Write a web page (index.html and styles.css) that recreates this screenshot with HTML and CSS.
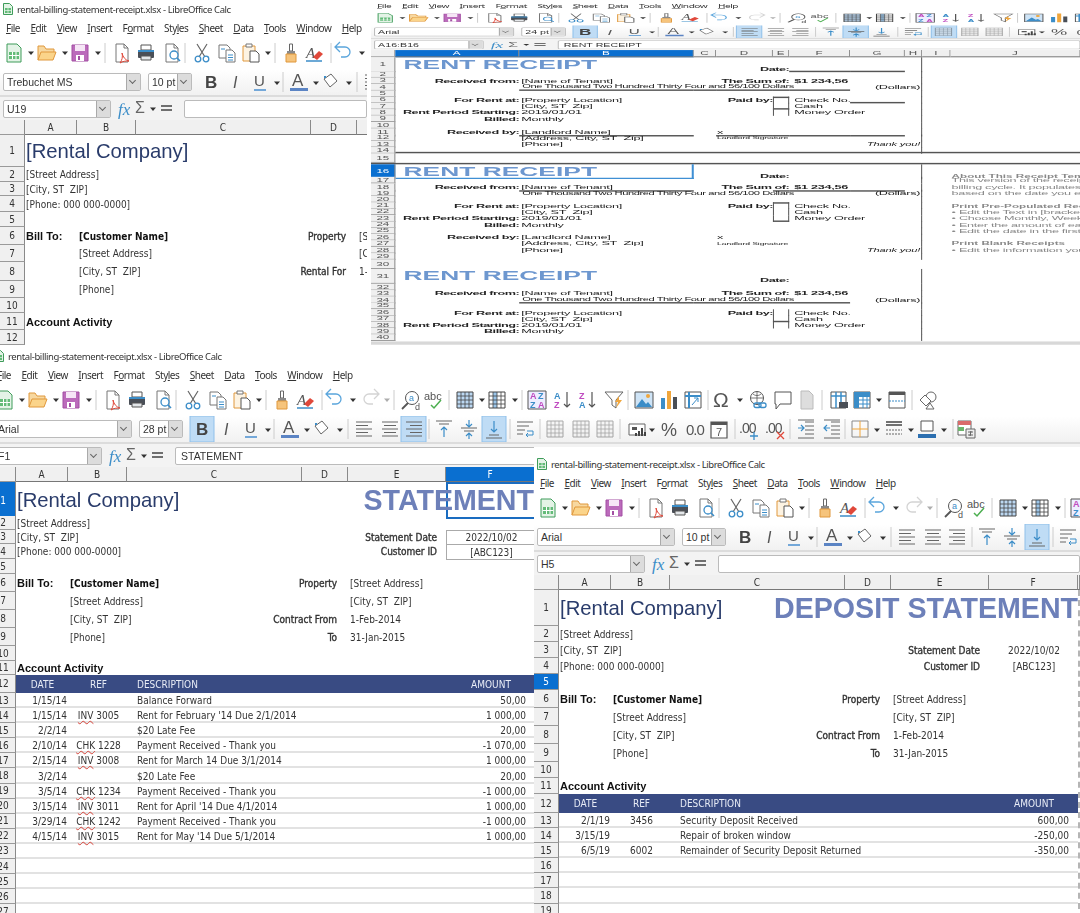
FILE: index.html
```html
<!DOCTYPE html>
<html lang="en">
<head>
    <meta charset="UTF-8">
    <title>rental-billing-statement-receipt.xlsx - LibreOffice Calc</title>
    <link rel="stylesheet" href="styles.css">
</head>
<body>
    <!-- shared toolbar artwork, drawn once and reused by every window -->
    <svg class="defs" width="0" height="0">
        <defs>
            <path id="dd" d="M-3-1.5h6l-3 3.5z" fill="#333"/>
            <g id="doc"><path d="M-6-9h8l4 4v14H-6z" fill="#fff" stroke="#777"/><path d="M2-9v4h4" fill="none" stroke="#777"/></g>
            <g id="grid"><path d="M-8-8h16v16H-8z" stroke="#444"/><path d="M-8-4h16M-8 0h16M-8 4h16M-4-8V8M0-8V8M4-8V8" stroke="#444" stroke-width=".8" fill="none"/></g>
        </defs>
        <symbol id="std-bar" viewBox="0 0 960 24">
            <g transform="translate(14 12)"><path d="M-7-9H3l4 4V9H-7z" fill="#e3f3e6" stroke="#3f9c5a"/><path d="M-5-1H5V6H-5z" fill="#63bb78"/><path d="M-5 2.5H5M-1.5-1V6M2-1V6" stroke="#fff"/></g>
            <use href="#dd" x="31" y="12"/>
            <g transform="translate(47 12)"><path d="M-9 7V-7h6l2 3h8v3" fill="#f7d8a0" stroke="#e0983c"/><path d="M-9 7l3-8H9L6 7z" fill="#fbd48a" stroke="#e0983c"/></g>
            <use href="#dd" x="65" y="12"/>
            <g transform="translate(80 12)"><path d="M-8-8H8V8H-8z" fill="#bb6bbb" stroke="#a34fa3"/><path d="M-5-8H5v6H-5z" fill="#f6e6f6"/><path d="M-4 2H4V8H-4z" fill="#fff"/><path d="M-2 3V7H0V3z" fill="#a34fa3"/></g>
            <use href="#dd" x="98" y="12"/>
            <path d="M105 2v20M185 2v20M275 2v20M331 2v20M403 2v20M458 2v20M531 2v20M637 2v20M717 2v20M831 2v20M921 2v20" stroke="#ccc"/>
            <g transform="translate(122 12)"><use href="#doc"/><path d="M0 0c1 4 3 7 7 8-3 0-6 0-9 2 2-3 3-6 2-10z" fill="none" stroke="#e0483a"/></g>
            <g transform="translate(146 12)"><path d="M-5-8H5v5H-5z" fill="#fff" stroke="#555"/><rect x="-8" y="-3" width="16" height="8" rx="1" fill="#4a4f57"/><path d="M-8-3H8v2H-8z" fill="#3b8dc8"/><path d="M-5 3H5V7H-5z" fill="#e4e7ea" stroke="#555"/></g>
            <g transform="translate(172 12)"><use href="#doc"/><circle cx="2" cy="2" r="4" fill="#fff" stroke="#3b8dc8" stroke-width="1.3"/><path d="M5 5l3 3" stroke="#3b8dc8" stroke-width="1.6"/></g>
            <g transform="translate(202 12)" fill="none"><path d="M-5-9L3 4M5-9L-3 4" stroke="#666" stroke-width="1.2"/><circle cx="-4" cy="6" r="2.8" stroke="#3b8dc8" stroke-width="1.3"/><circle cx="4" cy="6" r="2.8" stroke="#3b8dc8" stroke-width="1.3"/></g>
            <g transform="translate(227 12)" stroke="#777"><path d="M-8-8h8l3 3V5H-8z" fill="#fff"/><path d="M-1-3h6l3 3V9H-1z" fill="#fff"/><path d="M1 2h5M1 4.5h5M1 7h5M-6-4h4" stroke="#3b8dc8"/></g>
            <g transform="translate(251 12)"><path d="M-8-7H4V8H-8z" fill="#fdf3e2" stroke="#e0983c"/><path d="M-5-9h6v3h-6z" fill="#fff" stroke="#777"/><path d="M-1-2h6l3 3V9H-1z" fill="#fff" stroke="#555"/></g>
            <use href="#dd" x="268" y="12"/>
            <g transform="translate(291 12)"><path d="M-1.5-9h3v7h-3z" fill="#fff" stroke="#666"/><path d="M-4-2H4V1H-4z" fill="#8a8a8a"/><path d="M-5 1H5V9H-5z" fill="#f6c47c" stroke="#e0983c"/></g>
            <g transform="translate(314 12)"><text x="-8" y="5" font-family="Liberation Serif" font-style="italic" font-size="15" fill="#555">A</text><path d="M-8 8H8" stroke="#3b8dc8" stroke-width="1.5"/><path d="M-1 4l6-6 4 3-6 6z" fill="#e0483a"/></g>
            <use href="#dd" x="362" y="12"/>
            <path d="M340 16l-5-5 5-5M335 11h10a5 5 0 0 1 0 10h-4" transform="translate(0 -5)" fill="none" stroke="#5aa5dc" stroke-width="1.3"/>
            <path d="M383 16l5-5-5-5M388 11h-10a5 5 0 0 0 0 10h4" transform="translate(0 -5)" fill="none" stroke="#d4d4d4" stroke-width="1.3"/>
            <use href="#dd" x="396" y="12" opacity=".4"/>
            <g transform="translate(420 12)" fill="none"><circle cx="1" cy="-2" r="6.5" stroke="#555"/><path d="M-3 3l-6 6" stroke="#555" stroke-width="1.8"/><text x="-2" y="1" font-family="Liberation Sans" font-size="9" fill="#3b8dc8">a</text><text x="4" y="10" font-family="Liberation Sans" font-size="9" fill="#555">d</text></g>
            <g transform="translate(443 12)"><text x="-10" y="0" font-family="Liberation Sans" font-size="11" fill="#555">abc</text><path d="M-3 5l3 3 7-8" fill="none" stroke="#4caf50" stroke-width="1.5"/></g>
            <g transform="translate(474 12)"><use href="#grid" fill="#bcd8f2"/></g>
            <use href="#dd" x="491" y="12"/>
            <g transform="translate(506 12)"><path d="M-4-8H0V8H-4z" fill="#9cc6ea"/><use href="#grid" fill="none"/></g>
            <use href="#dd" x="524" y="12"/>
            <g transform="translate(546 12)" font-family="Liberation Sans" font-size="9" font-weight="bold"><path d="M-9-9H9V9H-9z" fill="#eef" stroke="#555"/><text x="-7" y="-1" fill="#c04bc0">A</text><text x="1" y="-1" fill="#3b8dc8">Z</text><text x="-7" y="8" fill="#3b8dc8">Z</text><text x="1" y="8" fill="#c04bc0">A</text></g>
            <g transform="translate(572 12)" font-family="Liberation Sans" font-size="9" font-weight="bold"><text x="-9" y="-1" fill="#3b8dc8">A</text><text x="-9" y="8" fill="#c04bc0">Z</text><path d="M4-8V7M1 4l3 3 3-3" fill="none" stroke="#555" stroke-width="1.2"/></g>
            <g transform="translate(597 12)" font-family="Liberation Sans" font-size="9" font-weight="bold"><text x="-9" y="-1" fill="#c04bc0">Z</text><text x="-9" y="8" fill="#3b8dc8">A</text><path d="M4-8V7M1 4l3 3 3-3" fill="none" stroke="#555" stroke-width="1.2"/></g>
            <g transform="translate(623 12)"><path d="M-9-8H9L2 0V8L-2 5V0z" fill="#fff" stroke="#666"/><path d="M5-4L1 2h3L2 8 8 0H5z" fill="#f0a63c"/></g>
            <g transform="translate(653 12)"><path d="M-9-8H9V8H-9z" fill="#cfe4f6" stroke="#555"/><path d="M-8 7l6-8 4 5 2-2 4 5z" fill="#3b8dc8"/><circle cx="4" cy="-4" r="2" fill="#f0a63c"/></g>
            <g transform="translate(678 12)"><path d="M-8-2h4V9h-4z" fill="#3b8dc8"/><path d="M-2-9H2V9H-2z" fill="#f0a63c"/><path d="M4-3H8V9H4z" fill="#4a4f57"/></g>
            <g transform="translate(702 12)"><path d="M-8-8H8V8H-8z" fill="#fff" stroke="#555"/><path d="M-8-4H8M-4-8V8" stroke="#3b8dc8" stroke-width="2"/><path d="M-1 5L5-2M5 2V-2H1" fill="none" stroke="#3b8dc8"/></g>
            <text x="722" y="19" font-family="Liberation Sans" font-size="21" fill="#555">Ω</text>
            <use href="#dd" x="749" y="12"/>
            <g transform="translate(767 12)" fill="none"><circle cx="-1" cy="-2" r="6.5" stroke="#555"/><path d="M-7-2H5M-1-8.5V4.5M-5-6c2 2 6 2 8 0" stroke="#555" stroke-width=".8"/><rect x="-4" y="3" width="7" height="4.5" rx="2" stroke="#3b8dc8" stroke-width="1.3"/><rect x="1" y="3" width="7" height="4.5" rx="2" stroke="#3b8dc8" stroke-width="1.3"/></g>
            <path d="M784 4h16v12h-11l-4 5v-5h-1z" fill="#fff" stroke="#555"/>
            <g transform="translate(816 12)"><path d="M-6-9H2L6-5V9H-6z" fill="#ddd" stroke="#bbb"/></g>
            <g transform="translate(848 12)"><path d="M-8-8H7V8H-8z" fill="#fff" stroke="#555"/><path d="M-8-4H7M-3-8V8M2-8V8" stroke="#3b8dc8" stroke-width="1.5"/><path d="M0 2H9V8H0z" fill="#4a4f57"/></g>
            <g transform="translate(871 12)"><path d="M-8-8H8V8H-8z" fill="#fff" stroke="#555"/><path d="M-8-8H8V-3H-8zM-8-3H-3V8H-8z" fill="#3b8dc8"/><path d="M-3 0H8M-3 4H8M1-3V8M5-3V8" stroke="#3b8dc8"/></g>
            <use href="#dd" x="888" y="12"/>
            <g transform="translate(906 12)"><path d="M-8-8H8V8H-8z" fill="#fff" stroke="#555"/><path d="M-8-8H8V-5H-8z" fill="#555"/><path d="M-8 1H8" stroke="#3b8dc8" stroke-dasharray="2 1"/></g>
            <g transform="translate(937 12)" fill="#fff" stroke="#666"><circle cx="3" cy="-3" r="5"/><path d="M-8 0l5-5 6 6-5 5z"/><path d="M-2 9l4-6 4 6z"/></g>
        </symbol>
        <symbol id="fmt-bar" viewBox="195 0 805 26">
            <text x="205" y="19" font-family="Liberation Sans" font-weight="bold" font-size="17" fill="#444">B</text>
            <text x="233" y="19" font-family="Liberation Sans" font-style="italic" font-size="16" fill="#555">I</text>
            <g transform="translate(260 13)"><text x="-6" y="4" font-family="Liberation Sans" font-size="15" fill="#555">U</text><path d="M-6 8H6" stroke="#4a8fd0" stroke-width="1.5"/></g>
            <use href="#dd" x="277" y="14"/>
            <path d="M283 3v20M357 3v20M438 3v20M519 3v20M549 3v20M629 3v20M744 3v20M799 3v20M854 3v20M962 3v20" stroke="#ccc"/>
            <g transform="translate(299 13)"><text x="-7" y="4" font-family="Liberation Sans" font-size="17" fill="#555">A</text><path d="M-9 6H9v3H-9z" fill="#5b84c4"/></g>
            <use href="#dd" x="316" y="14"/>
            <g transform="translate(331 13)"><path d="M-7-3L0-8 6-1-1 5z" fill="#fff" stroke="#666"/><path d="M-6-4v-2" stroke="#3b8dc8" stroke-width="2"/><path d="M-8 6H8v4H-8z" fill="#f4f4f4"/></g>
            <use href="#dd" x="349" y="14"/>
            <path transform="translate(373 13)" d="M-8-7H8M-8-3.5H4M-8 0H8M-8 3.5H4M-8 7H8" stroke="#666"/>
            <path transform="translate(399 13)" d="M-8-7H8M-6-3.5H6M-8 0H8M-6 3.5H6M-8 7H8" stroke="#666"/>
            <path transform="translate(423 13)" d="M-8-7H8M-4-3.5H8M-8 0H8M-4 3.5H8M-8 7H8" stroke="#666"/>
            <g transform="translate(453 13)"><path d="M-8-8H8M-5-5H5" stroke="#666" stroke-width="1.2"/><path d="M0 8V-2M-3 1l3-3 3 3" fill="none" stroke="#3b8dc8" stroke-width="1.2"/></g>
            <g transform="translate(478 13)"><path d="M-8-1H8M-5 2H5" stroke="#666" stroke-width="1.2"/><path d="M0-9v7M-3-5l3 3 3-3M0 10V4M-3 7l3-3 3 3" fill="none" stroke="#3b8dc8" stroke-width="1.2"/></g>
            <g transform="translate(503 13)"><path d="M-8 9H8M-5 6H5" stroke="#666" stroke-width="1.2"/><path d="M0-8V3M-3 0l3 3 3-3" fill="none" stroke="#3b8dc8" stroke-width="1.2"/></g>
            <g transform="translate(534 13)"><path d="M-8-7H8M-8-3H4M-8 1H0M-8 5H-2" stroke="#666" stroke-width="1.2"/><path d="M2 2h6v4H1M3 4L1 6l2 2" fill="none" stroke="#3b8dc8"/></g>
            <g transform="translate(564 13)"><use href="#grid" fill="#eee" opacity=".45"/></g>
            <g transform="translate(590 13)"><use href="#grid" fill="#eee" opacity=".45"/></g>
            <g transform="translate(614 13)"><use href="#grid" fill="#eee" opacity=".45"/></g>
            <g transform="translate(646 13)"><path d="M-8-5H8V6H-8z" fill="#fff" stroke="#666"/><path d="M-5-2H0V1H-5z" fill="#555"/><path d="M2 7V2M5 7V-1M8 7V3M-1 7V4" stroke="#444" stroke-width="2"/></g>
            <use href="#dd" x="661" y="14"/>
            <text x="670" y="20" font-family="Liberation Sans" font-size="18" fill="#555">%</text>
            <text x="695" y="19" font-family="Liberation Sans" font-size="15" letter-spacing="-1" fill="#555">0.0</text>
            <g transform="translate(728 13)"><path d="M-8-7H8V9H-8z" fill="#fff" stroke="#555" stroke-width="1.2"/><path d="M-8-7H8V-4H-8z" fill="#555"/><text x="-3" y="7" font-family="Liberation Sans" font-size="11" fill="#555">7</text></g>
            <g transform="translate(759 13)"><text x="-11" y="4" font-family="Liberation Sans" font-size="14" letter-spacing="-1" fill="#555">.00</text><path d="M4 3v8M0 7h8" stroke="#3b8dc8" stroke-width="1.3"/></g>
            <g transform="translate(785 13)"><text x="-11" y="4" font-family="Liberation Sans" font-size="14" letter-spacing="-1" fill="#555">.00</text><path d="M1 3l7 7M8 3l-7 7" stroke="#e0483a" stroke-width="1.3"/></g>
            <g transform="translate(815 13)"><path d="M-1-7H8M-1-3H8M-1 1H8M-1 5H8M-8 9H8M-8-9H8" stroke="#666"/><path d="M-8-1H-2M-5-4l3 3-3 3" fill="none" stroke="#3b8dc8" stroke-width="1.2"/></g>
            <g transform="translate(841 13)"><path d="M-1-7H8M-1-3H8M-1 1H8M-1 5H8M-8 9H8M-8-9H8" stroke="#666"/><path d="M-2-1H-8M-5-4l-3 3 3 3" fill="none" stroke="#3b8dc8" stroke-width="1.2"/></g>
            <g transform="translate(869 13)" fill="none"><path d="M-8-8H8V8H-8z" stroke="#888"/><path d="M0-8V8M-8 0H8" stroke="#f0a63c"/></g>
            <use href="#dd" x="886" y="14"/>
            <path d="M895 6h16M895 9h16" stroke="#444" stroke-width="1.4"/><path d="M895 14h16M895 18h16" stroke="#666" stroke-dasharray="2 1"/>
            <use href="#dd" x="920" y="14"/>
            <g transform="translate(936 13)"><path d="M-6-8H6V2H-6z" fill="#fff" stroke="#555"/><path d="M-9 5H9v4H-9z" fill="#2c6fb0"/></g>
            <use href="#dd" x="953" y="14"/>
            <g transform="translate(975 13)"><path d="M-8-8H5V6H-8z" fill="#fff" stroke="#666"/><path d="M-8-8H5V-4H-8z" fill="#d96b6b"/><path d="M-8-2H-2V2H-8z" fill="#6cb56c"/><path d="M0 0H9V9H0z" fill="#eee" stroke="#666"/><path d="M2 3H7M2 6H7M5 2L4 7" stroke="#444" stroke-width=".8"/></g>
            <use href="#dd" x="992" y="14"/>
        </symbol>
        <symbol id="calc-icon" viewBox="0 0 10 12">
            <path d="M.5.5h6l3 3v8H.5z" fill="#e3f3e6" stroke="#3f9c5a"/><path d="M2 5H8v5H2z" fill="#63bb78"/><path d="M2 7.5H8M5 5v5" stroke="#fff" stroke-width=".6"/>
        </symbol>
        <symbol id="fx-bar" viewBox="0 0 80 20">
            <text x="4" y="16" font-family="Liberation Serif" font-style="italic" font-size="17" fill="#3b8dc8">fx</text>
            <text x="21" y="14" font-family="Liberation Sans" font-size="16" fill="#666">Σ</text>
            <use href="#dd" x="39" y="10"/>
            <path d="M47 7H58M47 11H58" stroke="#444" stroke-width="1.5"/>
        </symbol>
    </svg>

    <!-- top left window -->
    <div class="win win-a">
        <div class="titlebar"><svg class="app-icon"><use href="#calc-icon"/></svg>rental-billing-statement-receipt.xlsx - LibreOffice Calc</div>
        <div class="menubar"><span><u>F</u>ile</span><span><u>E</u>dit</span><span><u>V</u>iew</span><span><u>I</u>nsert</span><span>F<u>o</u>rmat</span><span>Sty<u>l</u>es</span><span><u>S</u>heet</span><span><u>D</u>ata</span><span><u>T</u>ools</span><span><u>W</u>indow</span><span><u>H</u>elp</span></div>
        <div class="toolbar"><svg class="std-icons"><use href="#std-bar"/></svg></div>
        <div class="fmtbar">
            <div class="combo font-box">Trebuchet MS<i class="arrow"></i></div>
            <div class="combo size-box">10 pt<i class="arrow"></i></div>
            <svg class="fmt-icons" viewBox="195 0 805 26"><use x="195" href="#fmt-bar"/></svg>
        </div>
        <div class="formulabar">
            <div class="combo name-box">U19<i class="arrow"></i></div>
            <svg class="fx-icons"><use href="#fx-bar"/></svg>
            <div class="formula"></div>
        </div>
        <div class="sheet">
            <div class="row colhdr"><div class="rh"></div><div class="ch">A</div><div class="ch">B</div><div class="ch">C</div><div class="ch">D</div><div class="ch">E</div><div class="ch">F</div><div class="ch"></div></div>
            <div class="row h32"><div class="rh">1</div><div class="cell c-a company">[Rental Company]</div></div>
            <div class="row h15"><div class="rh">2</div><div class="cell c-a">[Street Address]</div></div>
            <div class="row h14"><div class="rh">3</div><div class="cell c-a">[City, ST&nbsp; ZIP]</div></div>
            <div class="row h16"><div class="rh">4</div><div class="cell c-a">[Phone: 000 000-0000]</div></div>
            <div class="row h15"><div class="rh">5</div></div>
            <div class="row h18"><div class="rh">6</div><div class="cell c-a bill">Bill To:</div><div class="cell c-b strong">[Customer Name]</div><div class="cell c-d label">Property</div><div class="cell c-e">[Street Address]</div></div>
            <div class="row h17"><div class="rh">7</div><div class="cell c-b">[Street Address]</div><div class="cell c-e">[City, ST&nbsp; ZIP]</div></div>
            <div class="row h19"><div class="rh">8</div><div class="cell c-b">[City, ST&nbsp; ZIP]</div><div class="cell c-d label">Rental For</div><div class="cell c-e">1-Feb-2014</div></div>
            <div class="row h17"><div class="rh">9</div><div class="cell c-b">[Phone]</div></div>
            <div class="row h15"><div class="rh">10</div></div>
            <div class="row h17"><div class="rh">11</div><div class="cell c-a bill">Account Activity</div></div>
            <div class="row h15"><div class="rh">12</div></div>
        </div>
    </div>

    <!-- bottom left window, its toolbars run the whole width behind the last window -->
    <div class="win win-c">
        <div class="titlebar"><svg class="app-icon"><use href="#calc-icon"/></svg>rental-billing-statement-receipt.xlsx - LibreOffice Calc</div>
        <div class="menubar"><span><u>F</u>ile</span><span><u>E</u>dit</span><span><u>V</u>iew</span><span><u>I</u>nsert</span><span>F<u>o</u>rmat</span><span>Sty<u>l</u>es</span><span><u>S</u>heet</span><span><u>D</u>ata</span><span><u>T</u>ools</span><span><u>W</u>indow</span><span><u>H</u>elp</span></div>
        <div class="toolbar"><svg class="std-icons"><use href="#std-bar"/></svg></div>
        <div class="fmtbar">
            <div class="combo font-box">Arial<i class="arrow"></i></div>
            <div class="combo size-box">28 pt<i class="arrow"></i></div>
            <svg class="fmt-icons" viewBox="195 0 805 26"><rect class="hl" x="199" y="0" width="24" height="26"/><rect class="hl" x="410" y="0" width="25" height="26"/><rect class="hl" x="491" y="0" width="24" height="26"/><use x="195" href="#fmt-bar"/></svg>
        </div>
        <div class="formulabar">
            <div class="combo name-box">F1<i class="arrow"></i></div>
            <svg class="fx-icons"><use href="#fx-bar"/></svg>
            <div class="formula">STATEMENT</div>
        </div>
        <div class="sheet">
            <div class="row colhdr"><div class="rh"></div><div class="ch">A</div><div class="ch">B</div><div class="ch">C</div><div class="ch">D</div><div class="ch">E</div><div class="ch on">F</div></div>
            <div class="row h34"><div class="rh on">1</div><div class="cell c-a company">[Rental Company]</div><div class="cell c-f doc-title selected">STATEMENT</div></div>
            <div class="row h14"><div class="rh">2</div><div class="cell c-a">[Street Address]</div></div>
            <div class="row h14"><div class="rh">3</div><div class="cell c-a">[City, ST&nbsp; ZIP]</div><div class="cell c-e label">Statement Date</div><div class="cell c-f value boxed">2022/10/02</div></div>
            <div class="row h15"><div class="rh">4</div><div class="cell c-a">[Phone: 000 000-0000]</div><div class="cell c-e label">Customer ID</div><div class="cell c-f value boxed">[ABC123]</div></div>
            <div class="row h15"><div class="rh">5</div></div>
            <div class="row h18"><div class="rh">6</div><div class="cell c-a bill">Bill To:</div><div class="cell c-b strong">[Customer Name]</div><div class="cell c-d label">Property</div><div class="cell c-e">[Street Address]</div></div>
            <div class="row h18"><div class="rh">7</div><div class="cell c-b">[Street Address]</div><div class="cell c-e">[City, ST&nbsp; ZIP]</div></div>
            <div class="row h18"><div class="rh">8</div><div class="cell c-b">[City, ST&nbsp; ZIP]</div><div class="cell c-d label">Contract From</div><div class="cell c-e">1-Feb-2014</div></div>
            <div class="row h18"><div class="rh">9</div><div class="cell c-b">[Phone]</div><div class="cell c-d label">To</div><div class="cell c-e">31-Jan-2015</div></div>
            <div class="row h15"><div class="rh">10</div></div>
            <div class="row h14"><div class="rh">11</div><div class="cell c-a bill">Account Activity</div></div>
            <div class="row h18 band"><div class="rh">12</div><div class="cell c-a center">DATE</div><div class="cell c-b center">REF</div><div class="cell c-c desc">DESCRIPTION</div><div class="cell c-f center">AMOUNT</div></div>
            <div class="row item"><div class="rh">13</div><div class="cell c-a date">1/15/14</div><div class="cell c-c desc">Balance Forward</div><div class="cell c-f num">50,00</div></div>
            <div class="row item"><div class="rh">14</div><div class="cell c-a date">1/15/14</div><div class="cell c-b center"><span class="typo">INV</span>&nbsp;3005</div><div class="cell c-c desc">Rent for February '14 Due 2/1/2014</div><div class="cell c-f num">1 000,00</div></div>
            <div class="row item"><div class="rh">15</div><div class="cell c-a date">2/2/14</div><div class="cell c-c desc">$20 Late Fee</div><div class="cell c-f num">20,00</div></div>
            <div class="row item"><div class="rh">16</div><div class="cell c-a date">2/10/14</div><div class="cell c-b center"><span class="typo">CHK</span>&nbsp;1228</div><div class="cell c-c desc">Payment Received - Thank you</div><div class="cell c-f num">-1 070,00</div></div>
            <div class="row item"><div class="rh">17</div><div class="cell c-a date">2/15/14</div><div class="cell c-b center"><span class="typo">INV</span>&nbsp;3008</div><div class="cell c-c desc">Rent for March 14 Due 3/1/2014</div><div class="cell c-f num">1 000,00</div></div>
            <div class="row item"><div class="rh">18</div><div class="cell c-a date">3/2/14</div><div class="cell c-c desc">$20 Late Fee</div><div class="cell c-f num">20,00</div></div>
            <div class="row item"><div class="rh">19</div><div class="cell c-a date">3/5/14</div><div class="cell c-b center"><span class="typo">CHK</span>&nbsp;1234</div><div class="cell c-c desc">Payment Received - Thank you</div><div class="cell c-f num">-1 000,00</div></div>
            <div class="row item"><div class="rh">20</div><div class="cell c-a date">3/15/14</div><div class="cell c-b center"><span class="typo">INV</span>&nbsp;3011</div><div class="cell c-c desc">Rent for April '14 Due 4/1/2014</div><div class="cell c-f num">1 000,00</div></div>
            <div class="row item"><div class="rh">21</div><div class="cell c-a date">3/29/14</div><div class="cell c-b center"><span class="typo">CHK</span>&nbsp;1242</div><div class="cell c-c desc">Payment Received - Thank you</div><div class="cell c-f num">-1 000,00</div></div>
            <div class="row item"><div class="rh">22</div><div class="cell c-a date">4/15/14</div><div class="cell c-b center"><span class="typo">INV</span>&nbsp;3015</div><div class="cell c-c desc">Rent for May '14 Due 5/1/2014</div><div class="cell c-f num">1 000,00</div></div>
            <div class="row item"><div class="rh">23</div></div>
            <div class="row item"><div class="rh">24</div></div>
            <div class="row item"><div class="rh">25</div></div>
            <div class="row item"><div class="rh">26</div></div>
            <div class="row item"><div class="rh">27</div></div>
        </div>
    </div>

    <!-- bottom right window -->
    <div class="win win-d">
        <div class="titlebar"><svg class="app-icon"><use href="#calc-icon"/></svg>rental-billing-statement-receipt.xlsx - LibreOffice Calc</div>
        <div class="menubar"><span><u>F</u>ile</span><span><u>E</u>dit</span><span><u>V</u>iew</span><span><u>I</u>nsert</span><span>F<u>o</u>rmat</span><span>Sty<u>l</u>es</span><span><u>S</u>heet</span><span><u>D</u>ata</span><span><u>T</u>ools</span><span><u>W</u>indow</span><span><u>H</u>elp</span></div>
        <div class="toolbar"><svg class="std-icons"><use href="#std-bar"/></svg></div>
        <div class="fmtbar">
            <div class="combo font-box">Arial<i class="arrow"></i></div>
            <div class="combo size-box">10 pt<i class="arrow"></i></div>
            <svg class="fmt-icons" viewBox="195 0 805 26"><rect class="hl" x="491" y="0" width="24" height="26"/><use x="195" href="#fmt-bar"/></svg>
        </div>
        <div class="formulabar">
            <div class="combo name-box">H5<i class="arrow"></i></div>
            <svg class="fx-icons"><use href="#fx-bar"/></svg>
            <div class="formula"></div>
        </div>
        <div class="sheet">
            <div class="row colhdr"><div class="rh"></div><div class="ch">A</div><div class="ch">B</div><div class="ch">C</div><div class="ch">D</div><div class="ch">E</div><div class="ch">F</div><div class="ch"></div></div>
            <div class="row h36"><div class="rh">1</div><div class="cell c-a company">[Rental Company]</div><div class="cell c-f doc-title">DEPOSIT STATEMENT</div></div>
            <div class="row h16"><div class="rh">2</div><div class="cell c-a">[Street Address]</div></div>
            <div class="row h16"><div class="rh">3</div><div class="cell c-a">[City, ST&nbsp; ZIP]</div><div class="cell c-e label">Statement Date</div><div class="cell c-f value">2022/10/02</div></div>
            <div class="row h16"><div class="rh">4</div><div class="cell c-a">[Phone: 000 000-0000]</div><div class="cell c-e label">Customer ID</div><div class="cell c-f value">[ABC123]</div></div>
            <div class="row h16"><div class="rh on">5</div></div>
            <div class="row h18"><div class="rh">6</div><div class="cell c-a bill">Bill To:</div><div class="cell c-b strong">[Customer Name]</div><div class="cell c-d label">Property</div><div class="cell c-e">[Street Address]</div></div>
            <div class="row h18"><div class="rh">7</div><div class="cell c-b">[Street Address]</div><div class="cell c-e">[City, ST&nbsp; ZIP]</div></div>
            <div class="row h18"><div class="rh">8</div><div class="cell c-b">[City, ST&nbsp; ZIP]</div><div class="cell c-d label">Contract From</div><div class="cell c-e">1-Feb-2014</div></div>
            <div class="row h18"><div class="rh">9</div><div class="cell c-b">[Phone]</div><div class="cell c-d label">To</div><div class="cell c-e">31-Jan-2015</div></div>
            <div class="row h16"><div class="rh">10</div></div>
            <div class="row h16"><div class="rh">11</div><div class="cell c-a bill">Account Activity</div></div>
            <div class="row h19 band"><div class="rh">12</div><div class="cell c-a center">DATE</div><div class="cell c-b center">REF</div><div class="cell c-c desc">DESCRIPTION</div><div class="cell c-f center">AMOUNT</div></div>
            <div class="row item"><div class="rh">13</div><div class="cell c-a date">2/1/19</div><div class="cell c-b center">3456</div><div class="cell c-c desc">Security Deposit Received</div><div class="cell c-f num">600,00</div></div>
            <div class="row item"><div class="rh">14</div><div class="cell c-a date">3/15/19</div><div class="cell c-c desc">Repair of broken window</div><div class="cell c-f num">-250,00</div></div>
            <div class="row item"><div class="rh">15</div><div class="cell c-a date">6/5/19</div><div class="cell c-b center">6002</div><div class="cell c-c desc">Remainder of Security Deposit Returned</div><div class="cell c-f num">-350,00</div></div>
            <div class="row item"><div class="rh">16</div></div>
            <div class="row item"><div class="rh">17</div></div>
            <div class="row item"><div class="rh">18</div></div>
            <div class="row item"><div class="rh">19</div></div>
            <div class="page-break"></div>
        </div>
    </div>

    <!-- top right window, a shot squashed to half its height -->
    <div class="win win-b">
        <div class="titlebar"></div>
        <div class="menubar"><span><u>F</u>ile</span><span><u>E</u>dit</span><span><u>V</u>iew</span><span><u>I</u>nsert</span><span>F<u>o</u>rmat</span><span>Sty<u>l</u>es</span><span><u>S</u>heet</span><span><u>D</u>ata</span><span><u>T</u>ools</span><span><u>W</u>indow</span><span><u>H</u>elp</span></div>
        <div class="toolbar"><svg class="std-icons"><use href="#std-bar"/></svg></div>
        <div class="fmtbar">
            <div class="combo font-box">Arial<i class="arrow"></i></div>
            <div class="combo size-box">24 pt<i class="arrow"></i></div>
            <svg class="fmt-icons" viewBox="195 0 805 26"><rect class="hl" x="199" y="0" width="24" height="26"/><rect class="hl" x="360" y="0" width="25" height="26"/><rect class="hl" x="465" y="0" width="25" height="26"/><rect class="hl" x="552" y="0" width="25" height="26"/><use x="195" href="#fmt-bar"/></svg>
        </div>
        <div class="formulabar">
            <div class="combo name-box">A16:B16<i class="arrow"></i></div>
            <svg class="fx-icons"><use href="#fx-bar"/></svg>
            <div class="formula">RENT RECEIPT</div>
        </div>
        <div class="sheet">
            <div class="row colhdr"><div class="rh"></div><div class="ch on">A</div><div class="ch on">B</div><div class="ch">C</div><div class="ch">D</div><div class="ch">E</div><div class="ch">F</div><div class="ch">G</div><div class="ch">H</div><div class="ch">I</div><div class="ch">J</div></div>

            <div class="row rc h-title"><div class="rh">1</div><div class="cell c-a rc-title">RENT RECEIPT</div><div class="cell c-e rc-label low">Date:</div><div class="cell c-f rule"></div><div class="cell c-g rule"></div></div>
            <div class="row rc"><div class="rh">2</div></div>
            <div class="row rc"><div class="rh">3</div><div class="cell c-a rc-label">Received from:</div><div class="cell c-b">[Name of Tenant]</div><div class="cell c-e rc-label">The Sum of:</div><div class="cell c-f strong">$1 234,56</div></div>
            <div class="row rc"><div class="rh">4</div><div class="cell c-b rule words">One Thousand Two Hundred Thirty Four and 56/100 Dollars</div><div class="cell c-c rule"></div><div class="cell c-d rule"></div><div class="cell c-e rule"></div><div class="cell c-f rule"></div><div class="cell c-h rc-label plain">(Dollars)</div></div>
            <div class="row rc"><div class="rh">5</div></div>
            <div class="row rc"><div class="rh">6</div><div class="cell c-a rc-label">For Rent at:</div><div class="cell c-b">[Property Location]</div><div class="cell c-d rc-label">Paid by:</div><div class="cell c-e box box-top"></div><div class="cell c-f">Check No.</div><div class="cell c-g rule"></div></div>
            <div class="row rc"><div class="rh">7</div><div class="cell c-b">[City, ST&nbsp; Zip]</div><div class="cell c-e box rule"></div><div class="cell c-f">Cash</div></div>
            <div class="row rc"><div class="rh">8</div><div class="cell c-a rc-label">Rent Period Starting:</div><div class="cell c-b">2019/01/01</div><div class="cell c-e box"></div><div class="cell c-f">Money Order</div></div>
            <div class="row rc"><div class="rh">9</div><div class="cell c-a rc-label">Billed:</div><div class="cell c-b">Monthly</div></div>
            <div class="row rc"><div class="rh">10</div></div>
            <div class="row rc"><div class="rh">11</div><div class="cell c-a rc-label">Received by:</div><div class="cell c-b rule">[Landlord Name]</div><div class="cell c-d rule">x</div><div class="cell c-e rule"></div><div class="cell c-f rule"></div><div class="cell c-g rule"></div></div>
            <div class="row rc"><div class="rh">12</div><div class="cell c-b">[Address, City, ST&nbsp; Zip]</div><div class="cell c-d sig">Landlord Signature</div></div>
            <div class="row rc"><div class="rh">13</div><div class="cell c-b">[Phone]</div><div class="cell c-h rc-label thanks">Thank you!</div></div>
            <div class="row rc rc-end"><div class="rh">14</div></div>
            <div class="row gap"><div class="rh">15</div></div>

            <div class="row rc h-title rc-start"><div class="rh on">16</div><div class="cell c-a rc-title merged">RENT RECEIPT</div><div class="cell c-e rc-label low">Date:</div><div class="cell c-j side-head low">About This Receipt Template</div></div>
            <div class="row rc"><div class="rh">17</div><div class="cell c-j side">This version of the receipt template lets you print a receipt for each</div></div>
            <div class="row rc"><div class="rh">18</div><div class="cell c-a rc-label">Received from:</div><div class="cell c-b rule">[Name of Tenant]</div><div class="cell c-e rc-label rule">The Sum of:</div><div class="cell c-f strong rule">$1 234,56</div><div class="cell c-g rule"></div><div class="cell c-j side">billing cycle. It populates the dates automatically</div></div>
            <div class="row rc"><div class="rh">19</div><div class="cell c-b words">One Thousand Two Hundred Thirty Four and 56/100 Dollars</div><div class="cell c-h rc-label plain">(Dollars)</div><div class="cell c-j side">based on the date you enter in the first receipt</div></div>
            <div class="row rc"><div class="rh">20</div></div>
            <div class="row rc"><div class="rh">21</div><div class="cell c-a rc-label">For Rent at:</div><div class="cell c-b">[Property Location]</div><div class="cell c-d rc-label">Paid by:</div><div class="cell c-e box box-top"></div><div class="cell c-f">Check No.</div><div class="cell c-j side-head">Print Pre-Populated Receipts</div></div>
            <div class="row rc"><div class="rh">22</div><div class="cell c-b">[City, ST&nbsp; Zip]</div><div class="cell c-e box"></div><div class="cell c-f">Cash</div><div class="cell c-j side">• Edit the Text in [brackets]</div></div>
            <div class="row rc"><div class="rh">23</div><div class="cell c-a rc-label">Rent Period Starting:</div><div class="cell c-b">2019/01/01</div><div class="cell c-e box rule"></div><div class="cell c-f">Money Order</div><div class="cell c-j side">• Choose Monthly, Weekly</div></div>
            <div class="row rc"><div class="rh">24</div><div class="cell c-a rc-label">Billed:</div><div class="cell c-b">Monthly</div><div class="cell c-j side">• Enter the amount of each</div></div>
            <div class="row rc"><div class="rh">25</div><div class="cell c-j side">• Edit the date in the first receipt</div></div>
            <div class="row rc"><div class="rh">26</div><div class="cell c-a rc-label">Received by:</div><div class="cell c-b">[Landlord Name]</div><div class="cell c-d">x</div></div>
            <div class="row rc"><div class="rh">27</div><div class="cell c-b">[Address, City, ST&nbsp; Zip]</div><div class="cell c-d sig">Landlord Signature</div><div class="cell c-j side-head">Print Blank Receipts</div></div>
            <div class="row rc"><div class="rh">28</div><div class="cell c-b">[Phone]</div><div class="cell c-h rc-label thanks">Thank you!</div><div class="cell c-j side">• Edit the information you want</div></div>
            <div class="row rc"><div class="rh">29</div></div>
            <div class="row gap"><div class="rh">30</div></div>

            <div class="row rc h-title3"><div class="rh">31</div><div class="cell c-a rc-title">RENT RECEIPT</div><div class="cell c-e rc-label low">Date:</div></div>
            <div class="row rc"><div class="rh">32</div></div>
            <div class="row rc"><div class="rh">33</div><div class="cell c-a rc-label">Received from:</div><div class="cell c-b">[Name of Tenant]</div><div class="cell c-e rc-label">The Sum of:</div><div class="cell c-f strong">$1 234,56</div></div>
            <div class="row rc"><div class="rh">34</div><div class="cell c-b rule words">One Thousand Two Hundred Thirty Four and 56/100 Dollars</div><div class="cell c-c rule"></div><div class="cell c-d rule"></div><div class="cell c-e rule"></div><div class="cell c-f rule"></div><div class="cell c-h rc-label plain">(Dollars)</div></div>
            <div class="row rc"><div class="rh">35</div></div>
            <div class="row rc"><div class="rh">36</div><div class="cell c-a rc-label">For Rent at:</div><div class="cell c-b">[Property Location]</div><div class="cell c-d rc-label">Paid by:</div><div class="cell c-e box"></div><div class="cell c-f">Check No.</div></div>
            <div class="row rc"><div class="rh">37</div><div class="cell c-b">[City, ST&nbsp; Zip]</div><div class="cell c-e box rule"></div><div class="cell c-f">Cash</div></div>
            <div class="row rc"><div class="rh">38</div><div class="cell c-a rc-label">Rent Period Starting:</div><div class="cell c-b">2019/01/01</div><div class="cell c-e box"></div><div class="cell c-f">Money Order</div></div>
            <div class="row rc"><div class="rh">39</div><div class="cell c-a rc-label">Billed:</div><div class="cell c-b">Monthly</div></div>
            <div class="row rc h-last"><div class="rh">40</div></div>
        </div>
        <div class="hscroll"></div>
        <div class="tabs"><span>Rent Receipt Template</span><span class="tab-on">Receipts</span><span>Instructions and Notes</span></div>
    </div>
</body>
</html>
```
FILE: styles.css
```css
html, body {
    margin: 0;
    height: 913px;
    overflow: hidden;
    background: #fff;
}
body {
    position: relative;
    font-family: "DejaVu Sans Condensed", "DejaVu Sans", sans-serif;
    font-size: 10px;
    color: #333;
}
.defs {
    position: absolute;
}

/* windows of the collage */
.win {
    position: absolute;
    overflow: hidden;
    background: #fff;
    filter: blur(0.2px);
    --cols: 25px 52px 59px 175px 46px 98px 89px 1fr;
}
.win-a {
    left: 0;
    top: -1px;
    width: 367px;
    height: 347px;
}
.win-b {
    left: 370.5px;
    top: -8px;
    width: 699px;
    height: 735px;
    transform: scale(1.015, 0.48);
    transform-origin: 0 0;
    filter: blur(0.35px);
    --cols: 24px 122px 172px 22px 56px 16px 60px 54px 17px 28px 1fr;
}
.win-c {
    left: -9px;
    top: 346px;
    width: 1089px;
    height: 567px;
}
.win-d {
    left: 534px;
    top: 447px;
    width: 546px;
    height: 466px;
    padding-top: 7px;
    box-sizing: border-box;
}

/* window chrome */
.titlebar {
    display: flex;
    align-items: center;
    height: 20px;
    padding-left: 3px;
    font-family: "Noto Sans", sans-serif;
    font-size: 9.5px;
    letter-spacing: -0.4px;
    color: #333;
    white-space: nowrap;
}
.app-icon {
    width: 10px;
    height: 12px;
    margin-right: 4px;
}
.menubar {
    display: flex;
    align-items: center;
    gap: 10.5px;
    height: 18px;
    padding-left: 6px;
    font-family: "Noto Sans", sans-serif;
    font-size: 10px;
    letter-spacing: -0.5px;
    color: #333;
    white-space: nowrap;
}
.toolbar {
    height: 32px;
    display: flex;
    align-items: center;
}
.std-icons {
    flex: none;
    width: 960px;
    height: 24px;
}
.fmtbar {
    display: flex;
    align-items: center;
    height: 26px;
    padding-left: 3px;
    background: linear-gradient(#fff, #f1f1f1);
}
.combo {
    position: relative;
    flex: none;
    display: flex;
    align-items: center;
    box-sizing: border-box;
    height: 18px;
    padding-left: 3px;
    background: #fff;
    border: 1px solid #bbb;
    border-radius: 2px;
    font-family: "Liberation Sans", sans-serif;
    font-size: 10.5px;
    color: #333;
}
.arrow {
    position: absolute;
    right: 0;
    top: 0;
    bottom: 0;
    width: 13px;
    background: #dcdcdc;
    border-left: 1px solid #aaa;
}
.arrow::after {
    content: "";
    position: absolute;
    left: 3px;
    top: 4px;
    width: 4px;
    height: 4px;
    border-right: 1px solid #666;
    border-bottom: 1px solid #666;
    transform: rotate(45deg);
}
.font-box {
    width: 138px;
}
.size-box {
    width: 44px;
    margin-left: 7px;
}
.fmt-icons {
    flex: none;
    width: 805px;
    height: 26px;
    margin-left: 3px;
}
.hl {
    fill: #bfdcf5;
    stroke: #8fc0ea;
}
.formulabar {
    display: flex;
    align-items: center;
    height: 25px;
    padding-left: 3px;
    background: #f3f3f3;
    border-top: 2px solid #dcdcdc;
    box-sizing: border-box;
}
.name-box {
    width: 108px;
}
.fx-icons {
    flex: none;
    width: 80px;
    height: 20px;
    margin-left: 3px;
    margin-right: -10px;
}
.formula {
    flex: 1;
    box-sizing: border-box;
    height: 18px;
    padding-left: 5px;
    background: #fff;
    border: 1px solid #bbb;
    border-radius: 2px;
    font-family: "Liberation Sans", sans-serif;
    font-size: 10.5px;
    line-height: 16px;
    color: #333;
}

/* sheet rows */
.sheet {
    position: relative;
}
.row {
    display: grid;
    grid-template-columns: var(--cols);
    height: 15px;
}
.row > * {
    grid-row: 1;
    min-width: 0;
}
.h14 { height: 14px; }
.h15 { height: 15px; }
.h16 { height: 16px; }
.h17 { height: 17px; }
.h18 { height: 18px; }
.h19 { height: 19px; }
.h32 { height: 32px; }
.h34 { height: 34px; }
.h36 { height: 36px; }
.item { height: 15.1px; }
.item::after {
    content: "";
    grid-row: 1;
    grid-column: 2 / 8;
    border-bottom: 2px solid #e2e2e2;
}
.band::before {
    content: "";
    grid-row: 1;
    grid-column: 2 / 8;
    background: #394b83;
}
.rh, .ch {
    display: flex;
    align-items: center;
    justify-content: center;
    box-sizing: border-box;
    background: #f0f0f0;
    border-bottom: 1px solid #9a9a9a;
    color: #333;
}
.rh {
    grid-column: 1;
    border-right: 1px solid #8a8a8a;
}
.ch {
    border-right: 1px solid #8a8a8a;
    border-bottom-color: #777;
}
.on {
    background: #0a6fd0;
    color: #fff;
}
.cell {
    display: flex;
    align-items: center;
    white-space: nowrap;
    padding-left: 1px;
    color: #333;
}
.c-a { grid-column: 2; }
.c-b { grid-column: 3; padding-left: 2px; }
.c-c { grid-column: 4; }
.c-d { grid-column: 5; }
.c-e { grid-column: 6; padding-left: 2px; }
.c-f { grid-column: 7; }
.c-g { grid-column: 8; }
.c-h { grid-column: 9; }
.c-j { grid-column: 11; }
.company {
    font-family: "Liberation Sans", sans-serif;
    font-size: 20.3px;
    color: #2a3c6b;
}
.strong {
    font-weight: bold;
    color: #111;
}
.bill {
    font-family: "Liberation Sans", sans-serif;
    font-size: 11px;
    font-weight: bold;
    color: #111;
}
.label {
    justify-content: flex-end;
    padding-right: 9px;
    -webkit-text-stroke: 0.35px #333;
    color: #333;
}
.c-d.label {
    padding-right: 11px;
}
.value {
    justify-content: center;
}
.boxed {
    border: 1px solid #aaa;
    border-right: 0;
    margin-bottom: -1px;
}
.doc-title {
    justify-content: flex-end;
    padding: 0;
    font-family: "Liberation Sans", sans-serif;
    font-size: 28.6px;
    font-weight: bold;
    color: #6d80b9;
}
.selected {
    box-sizing: border-box;
    border: 2px solid #1a6cc0;
    border-right-width: 1px;
}
.band .cell {
    color: #e8ecf6;
}
.center {
    justify-content: center;
}
.date {
    justify-content: flex-end;
    padding-right: 1px;
}
.desc {
    padding-left: 10px;
}
.num {
    justify-content: flex-end;
    padding-right: 9px;
}
.typo {
    position: relative;
    z-index: 1;
    text-decoration: underline wavy #d8433a;
    text-decoration-thickness: 1px;
    text-underline-offset: 1px;
}
.page-break {
    position: absolute;
    left: 544px;
    top: 15px;
    bottom: 0;
    border-left: 2px dashed #b5b5b5;
}

/* receipts of the squashed window: horizontal lines are drawn thick, they lose half */
.win-b .rh, .win-b .ch {
    border-bottom-width: 2px;
    font-family: "Liberation Sans", sans-serif;
    font-size: 11.5px;
    color: #555;
}
.win-b .rh.on, .win-b .ch.on {
    color: #fff;
}
.rc {
    height: 13.2px;
    font-family: "Liberation Sans", sans-serif;
    font-size: 12.5px;
    letter-spacing: -0.3px;
}
.rc .cell {
    color: #222;
}
.rc .c-f {
    padding-left: 5px;
}
.rc::after {
    content: "";
    grid-row: 1;
    grid-column: 9;
    border-right: 1.5px solid #555;
}
.h-title { height: 29px; }
.h-title3 { height: 31px; }
.gap { height: 20px; }
.rc-end { border-bottom: 3px solid #555; box-sizing: border-box; }
.rc-start { border-top: 3px solid #555; box-sizing: border-box; }
.rc-title {
    padding-left: 8px;
    font-size: 26px;
    letter-spacing: 0;
    font-weight: bold;
    color: #6d97cf !important;
}
.merged {
    grid-column: 2 / 4;
    box-shadow: inset 0 -3px #3f8fd4, inset -2px 0 #3f8fd4;
}
.rc-label {
    justify-content: flex-end;
    font-weight: bold;
    letter-spacing: -0.5px;
}
.low {
    align-items: flex-end;
}
.plain {
    font-weight: normal;
    padding-right: 2px;
    letter-spacing: -0.3px;
}
.thanks {
    font-weight: normal;
    font-style: italic;
    font-size: 11px;
    padding-right: 2px;
    letter-spacing: -0.2px;
}
.rule {
    border-bottom: 3px solid #555;
    box-sizing: border-box;
}
.words {
    padding-left: 3px;
    font-size: 11px;
    letter-spacing: -0.45px;
}
.box {
    border-left: 1.5px solid #555;
    border-right: 1.5px solid #555;
}
.box-top {
    border-top: 3px solid #555;
    box-sizing: border-box;
}
.sig {
    font-size: 8.5px;
    letter-spacing: -0.1px;
}
.rc .side, .rc .side-head {
    color: #888;
}
.side-head {
    font-weight: bold;
    font-size: 11.5px;
    letter-spacing: 0;
}
.hscroll {
    height: 10px;
    margin-top: 1px;
    background: #d8d8d8;
}
.tabs {
    display: flex;
    gap: 22px;
    padding-left: 30px;
    font-family: "Liberation Sans", sans-serif;
    font-size: 11px;
    white-space: nowrap;
}
.tab-on {
    font-weight: bold;
}
```
